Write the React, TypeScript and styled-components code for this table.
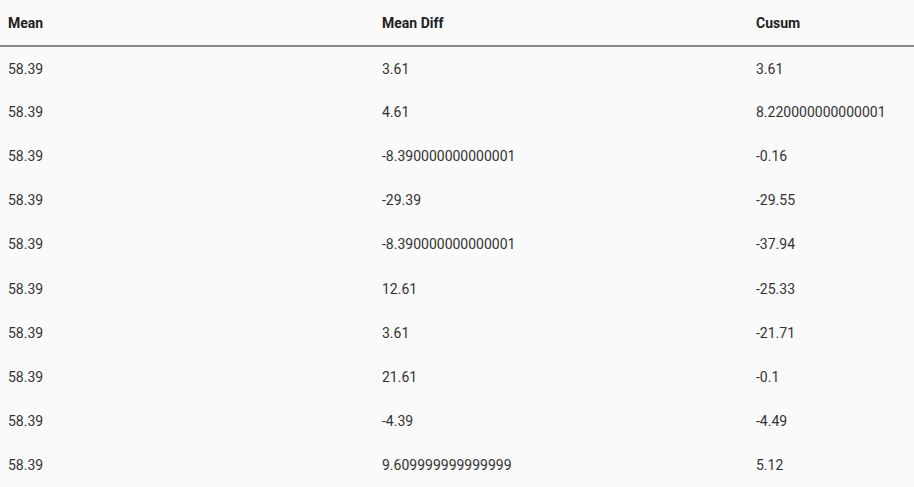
import styled, { createGlobalStyle } from 'styled-components';

const rows = [
  { mean: '58.39', diff: '3.61', cusum: '3.61' },
  { mean: '58.39', diff: '4.61', cusum: '8.220000000000001' },
  { mean: '58.39', diff: '-8.390000000000001', cusum: '-0.16' },
  { mean: '58.39', diff: '-29.39', cusum: '-29.55' },
  { mean: '58.39', diff: '-8.390000000000001', cusum: '-37.94' },
  { mean: '58.39', diff: '12.61', cusum: '-25.33' },
  { mean: '58.39', diff: '3.61', cusum: '-21.71' },
  { mean: '58.39', diff: '21.61', cusum: '-0.1' },
  { mean: '58.39', diff: '-4.39', cusum: '-4.49' },
  { mean: '58.39', diff: '9.609999999999999', cusum: '5.12' },
];

const GlobalStyle = createGlobalStyle`
  html, body {
    margin: 0;
    padding: 0;
    background-color: #fafafa;
    font-family: Roboto, 'Liberation Sans', sans-serif;
  }
`;

const Table = styled.table`
  width: 100%;
  border-collapse: collapse;
  table-layout: fixed;
  background-color: #fafafa;
`;

const HeadCell = styled.th<{ $width?: number }>`
  width: ${({ $width }) => ($width ? `${$width}px` : 'auto')};
  height: 46px;
  padding: 0 8px;
  text-align: left;
  font-size: 14px;
  font-weight: 700;
  color: #212121;
  border-bottom: 2px solid #8a8a8a;
  box-sizing: border-box;
`;

const Cell = styled.td`
  height: 44.1px;
  padding: 0 8px;
  font-size: 14px;
  font-weight: 400;
  color: #333333;
  white-space: nowrap;
  box-sizing: border-box;
`;

export default function App() {
  return (
    <>
      <GlobalStyle />
      <Table>
        <thead>
          <tr>
            <HeadCell $width={374}>Mean</HeadCell>
            <HeadCell $width={374}>Mean Diff</HeadCell>
            <HeadCell>Cusum</HeadCell>
          </tr>
        </thead>
        <tbody>
          {rows.map((row, index) => (
            <tr key={index}>
              <Cell>{row.mean}</Cell>
              <Cell>{row.diff}</Cell>
              <Cell>{row.cusum}</Cell>
            </tr>
          ))}
        </tbody>
      </Table>
    </>
  );
}
